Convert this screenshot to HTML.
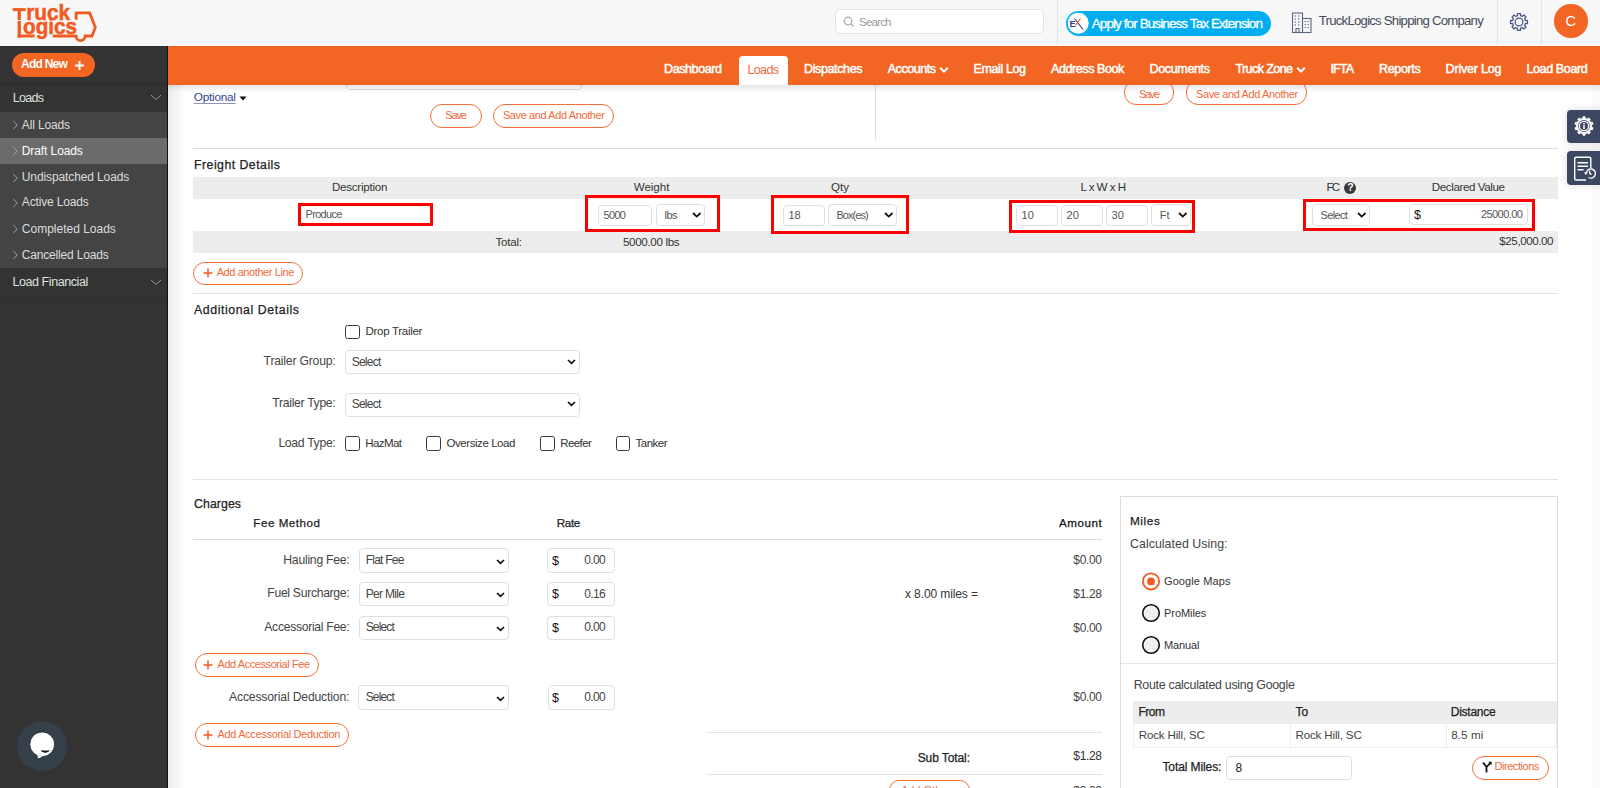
<!DOCTYPE html>
<html><head><meta charset="utf-8">
<style>
*{box-sizing:border-box;margin:0;padding:0}
html,body{width:1600px;height:788px;overflow:hidden;background:#fff;font-family:"Liberation Sans",sans-serif;color:#333}
.a{position:absolute}
.t{position:absolute;white-space:nowrap;line-height:1}
svg{position:absolute;overflow:visible}
</style></head><body>
<div class="a" style="left:0.0px;top:0.0px;width:1600.0px;height:46.0px;background:#f7f7f7"></div>
<div class="a" style="left:0.0px;top:46.0px;width:168.0px;height:742.0px;background:#333"></div>
<div class="a" style="left:167.0px;top:46.0px;width:1.0px;height:742.0px;background:#111"></div>
<div class="a" style="left:168.0px;top:46.0px;width:1432.0px;height:38.5px;background:#f26522"></div>
<div class="a" style="left:168.0px;top:84.5px;width:18.0px;height:703.5px;background:linear-gradient(90deg,#ececec,rgba(255,255,255,0))"></div>
<div class="a" style="left:1592.0px;top:84.5px;width:8.0px;height:703.5px;background:#fbfbfb"></div>
<svg style="left:0;top:0" width="110" height="46" viewBox="0 0 110 46">
<g fill="#f15a22">
<rect x="12.8" y="8.1" width="12.9" height="3"/><rect x="17.6" y="8.1" width="3.3" height="11.9"/>
<rect x="17.6" y="21" width="3.3" height="16.5"/><rect x="17.6" y="34.5" width="17" height="3"/>
<text transform="translate(26.2,20) scale(1,1.42)" font-family="Liberation Sans" font-weight="bold" font-size="16" stroke="#f15a22" stroke-width="0.35" textLength="44" lengthAdjust="spacingAndGlyphs">ruck</text>
<text transform="translate(23,33.5) scale(1,1.42)" font-family="Liberation Sans" font-weight="bold" font-size="16" stroke="#f15a22" stroke-width="0.35" textLength="54" lengthAdjust="spacingAndGlyphs">ogics</text>
</g>
<g fill="none" stroke="#f15a22" stroke-width="2.8" stroke-linejoin="miter">
<path d="M52.7 36 H76 A4.6 4.6 0 0 0 85.2 36 H92 L95.3 27.3 L89.6 12.9 H76.2 V19.8"/>
</g>
</svg>
<div class="a" style="left:834.5px;top:8.5px;width:209.0px;height:25.0px;background:#fff;border:1px solid #e3e3e3;border-radius:5px"></div>
<svg style="left:843px;top:16px" width="12" height="12" viewBox="0 0 12 12"><circle cx="5" cy="5" r="3.8" fill="none" stroke="#aaa" stroke-width="1.2"/><path d="M7.8 7.8 L10.5 10.5" stroke="#aaa" stroke-width="1.3"/></svg>
<div class="t" style="left:859.00px;top:17.00px;font-size:11.50px;color:#9a9a9a;letter-spacing:-0.787px">Search</div>
<div class="a" style="left:1057.0px;top:0.0px;width:1.0px;height:44.0px;background:#e2e2e2"></div>
<div class="a" style="left:1066.0px;top:11.0px;width:205.0px;height:24.5px;background:#00aeef;border-radius:13px"></div>
<svg style="left:1066px;top:11px" width="25" height="25" viewBox="0 0 25 25"><circle cx="12.2" cy="12.2" r="11" fill="#fff" stroke="#00aeef" stroke-width="1"/>
<text x="3.6" y="15.8" font-family="Liberation Sans" font-weight="bold" font-size="9" fill="#2b3a8c">E</text>
<path d="M8.5 7.5 L17 18.5" stroke="#2b3a8c" stroke-width="1.1"/><path d="M14.5 7.5 L9.5 14.5" stroke="#f15a22" stroke-width="1.1"/></svg>
<div class="t" style="left:1091.70px;top:17.00px;font-size:13.50px;color:#fff;letter-spacing:-0.906px;-webkit-text-stroke:0.3px #fff">Apply for Business Tax Extension</div>
<svg style="left:1291px;top:12px" width="22" height="22" viewBox="0 0 22 22"><g fill="none" stroke="#5b6584" stroke-width="1.1">
<rect x="1.5" y="1" width="10" height="19.5"/><rect x="11.5" y="6.5" width="8.5" height="14"/>
<path d="M3.5 4h1.5M7 4h1.5M3.5 7h1.5M7 7h1.5M3.5 10h1.5M7 10h1.5M3.5 13h1.5M7 13h1.5M13.5 9.5h1.3M16.5 9.5h1.3M13.5 12.5h1.3M16.5 12.5h1.3M13.5 15.5h1.3M16.5 15.5h1.3M5 20.5v-4h3v4"/></g></svg>
<div class="t" style="left:1318.80px;top:14.00px;font-size:13.20px;color:#454a5a;letter-spacing:-0.769px">TruckLogics Shipping Company</div>
<div class="a" style="left:1497.0px;top:0.0px;width:1.0px;height:44.0px;background:#e2e2e2"></div>
<svg style="left:1509.1px;top:11.7px" width="20" height="20" viewBox="0 0 20 20"><g fill="none" stroke="#4b5584" stroke-width="1.25" stroke-linejoin="round"><circle cx="10" cy="10" r="3.9"/>
<path d="M8.53 3.56 L8.49 1.53 L11.51 1.53 L11.47 3.56 L13.51 4.41 L14.92 2.94 L17.06 5.08 L15.59 6.49 L16.44 8.53 L18.47 8.49 L18.47 11.51 L16.44 11.47 L15.59 13.51 L17.06 14.92 L14.92 17.06 L13.51 15.59 L11.47 16.44 L11.51 18.47 L8.49 18.47 L8.53 16.44 L6.49 15.59 L5.08 17.06 L2.94 14.92 L4.41 13.51 L3.56 11.47 L1.53 11.51 L1.53 8.49 L3.56 8.53 L4.41 6.49 L2.94 5.08 L5.08 2.94 L6.49 4.41Z"/></g></svg>
<div class="a" style="left:1541.0px;top:0.0px;width:1.0px;height:44.0px;background:#e2e2e2"></div>
<div class="a" style="left:1554.0px;top:4.0px;width:33.5px;height:33.5px;background:#f26522;border-radius:50%"></div>
<div class="t" style="left:1565.50px;top:14.00px;font-size:14.50px;color:#fff">C</div>
<div class="a" style="left:346.0px;top:76.0px;width:236.0px;height:14.0px;border:1px solid #ddd;border-radius:4px;background:#fff"></div>
<div class="t" style="left:193.70px;top:92.00px;font-size:11.80px;color:#34458f;letter-spacing:-0.234px;text-decoration:underline;text-decoration-color:#8a93bd;text-underline-offset:1.5px">Optional</div>
<svg style="left:239px;top:96px" width="8" height="5" viewBox="0 0 8 5"><path d="M0.5 0.5 H7.5 L4 4.5Z" fill="#111"/></svg>
<div class="a" style="left:430.0px;top:104.0px;width:51.5px;height:23.5px;border:1px solid #f26f3a;border-radius:12px;background:#fff"></div>
<div class="t" style="left:445.30px;top:110.00px;font-size:11.00px;color:#f26a3a;letter-spacing:-1.154px">Save</div>
<div class="a" style="left:493.0px;top:104.0px;width:121.0px;height:23.5px;border:1px solid #f26f3a;border-radius:12px;background:#fff"></div>
<div class="t" style="left:502.90px;top:110.00px;font-size:11.00px;color:#f26a3a;letter-spacing:-0.389px">Save and Add Another</div>
<div class="a" style="left:875.0px;top:84.5px;width:1.0px;height:55.5px;background:#ddd"></div>
<div class="a" style="left:1124.0px;top:80.0px;width:50.4px;height:25.4px;border:1px solid #f26f3a;border-radius:12px;background:#fff"></div>
<div class="t" style="left:1138.90px;top:89.00px;font-size:11.00px;color:#f26a3a;letter-spacing:-1.254px">Save</div>
<div class="a" style="left:1186.3px;top:80.0px;width:121.1px;height:25.4px;border:1px solid #f26f3a;border-radius:12px;background:#fff"></div>
<div class="t" style="left:1196.00px;top:89.00px;font-size:11.00px;color:#f26a3a;letter-spacing:-0.384px">Save and Add Another</div>
<div class="a" style="left:193.0px;top:148.0px;width:1365.0px;height:1.0px;background:#ddd"></div>
<div class="a" style="left:168.0px;top:46.0px;width:1432.0px;height:38.5px;background:#f26522"></div>
<div class="a" style="left:168.0px;top:84.5px;width:1432.0px;height:7.5px;background:linear-gradient(rgba(0,0,0,0.1),rgba(0,0,0,0))"></div>
<div class="t" style="left:664.00px;top:63.00px;font-size:12.50px;color:#fff;letter-spacing:-0.391px;-webkit-text-stroke:0.5px #fff">Dashboard</div>
<div class="t" style="left:804.00px;top:63.00px;font-size:12.50px;color:#fff;letter-spacing:-0.368px;-webkit-text-stroke:0.5px #fff">Dispatches</div>
<div class="t" style="left:887.70px;top:63.00px;font-size:12.50px;color:#fff;letter-spacing:-0.448px;-webkit-text-stroke:0.5px #fff">Accounts</div>
<div class="t" style="left:973.60px;top:63.00px;font-size:12.50px;color:#fff;letter-spacing:-0.395px;-webkit-text-stroke:0.5px #fff">Email Log</div>
<div class="t" style="left:1051.00px;top:63.00px;font-size:12.50px;color:#fff;letter-spacing:-0.407px;-webkit-text-stroke:0.5px #fff">Address Book</div>
<div class="t" style="left:1149.60px;top:63.00px;font-size:12.50px;color:#fff;letter-spacing:-0.356px;-webkit-text-stroke:0.5px #fff">Documents</div>
<div class="t" style="left:1235.40px;top:63.00px;font-size:12.50px;color:#fff;letter-spacing:-0.572px;-webkit-text-stroke:0.5px #fff">Truck Zone</div>
<div class="t" style="left:1330.50px;top:63.00px;font-size:12.50px;color:#fff;letter-spacing:-0.896px;-webkit-text-stroke:0.5px #fff">IFTA</div>
<div class="t" style="left:1379.00px;top:63.00px;font-size:12.50px;color:#fff;letter-spacing:-0.342px;-webkit-text-stroke:0.5px #fff">Reports</div>
<div class="t" style="left:1445.60px;top:63.00px;font-size:12.50px;color:#fff;letter-spacing:-0.199px;-webkit-text-stroke:0.5px #fff">Driver Log</div>
<div class="t" style="left:1526.40px;top:63.00px;font-size:12.50px;color:#fff;letter-spacing:-0.369px;-webkit-text-stroke:0.5px #fff">Load Board</div>
<svg style="left:939.3px;top:66px" width="10" height="8" viewBox="0 0 10 8"><path d="M1.2 1.8 L5 5.6 L8.8 1.8" fill="none" stroke="#fff" stroke-width="2"/></svg>
<svg style="left:1296.0px;top:66px" width="10" height="8" viewBox="0 0 10 8"><path d="M1.2 1.8 L5 5.6 L8.8 1.8" fill="none" stroke="#fff" stroke-width="2"/></svg>
<div class="a" style="left:739.0px;top:56.0px;width:49.0px;height:28.5px;background:#fff;border-radius:4px 4px 0 0"></div>
<div class="t" style="left:747.50px;top:64.00px;font-size:12.50px;color:#f26a3a;letter-spacing:-0.641px">Loads</div>
<div class="a" style="left:12.3px;top:53.0px;width:82.9px;height:23.8px;background:#f26522;border-radius:12px"></div>
<div class="t" style="left:21.00px;top:58.00px;font-size:12.00px;color:#fff;font-weight:bold;letter-spacing:-0.746px">Add New</div>
<svg style="left:74px;top:60px" width="11" height="11" viewBox="0 0 11 11"><path d="M5.5 1 V10 M1 5.5 H10" stroke="#fff" stroke-width="2"/></svg>
<div class="a" style="left:0.0px;top:83.0px;width:167.0px;height:1.0px;background:#2b2b2b"></div>
<div class="a" style="left:0.0px;top:112.0px;width:167.0px;height:155.5px;background:#444"></div>
<div class="a" style="left:0.0px;top:137.7px;width:167.0px;height:26.2px;background:#6b6b6b"></div>
<div class="t" style="left:12.75px;top:92.00px;font-size:12.50px;color:#dde2de;letter-spacing:-0.703px">Loads</div>
<div class="t" style="left:12.40px;top:276.00px;font-size:12.50px;color:#dde2de;letter-spacing:-0.416px">Load Financial</div>
<svg style="left:150px;top:94px" width="12" height="7" viewBox="0 0 12 7"><path d="M1 1 L6 5.5 L11 1" fill="none" stroke="#999" stroke-width="1"/></svg>
<svg style="left:150px;top:279px" width="12" height="7" viewBox="0 0 12 7"><path d="M1 1 L6 5.5 L11 1" fill="none" stroke="#999" stroke-width="1"/></svg>
<div class="a" style="left:0.0px;top:297.0px;width:167.0px;height:1.0px;background:#2e2e2e"></div>
<div class="t" style="left:21.80px;top:119.00px;font-size:12.00px;color:#ddd;letter-spacing:-0.147px">All Loads</div>
<svg style="left:12px;top:120.1px" width="7" height="10" viewBox="0 0 7 10"><path d="M1.2 1 L5.3 5 L1.2 9" fill="none" stroke="#9aa3ab" stroke-width="1"/></svg>
<div class="t" style="left:21.80px;top:145.00px;font-size:12.00px;color:#fff;letter-spacing:-0.096px">Draft Loads</div>
<svg style="left:12px;top:146.2px" width="7" height="10" viewBox="0 0 7 10"><path d="M1.2 1 L5.3 5 L1.2 9" fill="none" stroke="#9aa3ab" stroke-width="1"/></svg>
<div class="t" style="left:21.80px;top:171.00px;font-size:12.00px;color:#ddd;letter-spacing:-0.114px">Undispatched Loads</div>
<svg style="left:12px;top:172.5px" width="7" height="10" viewBox="0 0 7 10"><path d="M1.2 1 L5.3 5 L1.2 9" fill="none" stroke="#9aa3ab" stroke-width="1"/></svg>
<div class="t" style="left:21.80px;top:196.00px;font-size:12.00px;color:#ddd;letter-spacing:-0.153px">Active Loads</div>
<svg style="left:12px;top:198.0px" width="7" height="10" viewBox="0 0 7 10"><path d="M1.2 1 L5.3 5 L1.2 9" fill="none" stroke="#9aa3ab" stroke-width="1"/></svg>
<div class="t" style="left:21.80px;top:223.00px;font-size:12.00px;color:#ddd">Completed Loads</div>
<svg style="left:12px;top:224.3px" width="7" height="10" viewBox="0 0 7 10"><path d="M1.2 1 L5.3 5 L1.2 9" fill="none" stroke="#9aa3ab" stroke-width="1"/></svg>
<div class="t" style="left:21.80px;top:249.00px;font-size:12.00px;color:#ddd;letter-spacing:-0.177px">Cancelled Loads</div>
<svg style="left:12px;top:250.1px" width="7" height="10" viewBox="0 0 7 10"><path d="M1.2 1 L5.3 5 L1.2 9" fill="none" stroke="#9aa3ab" stroke-width="1"/></svg>
<div class="a" style="left:17.0px;top:721.0px;width:50.0px;height:50.0px;background:#36404a;border-radius:50%"></div>
<svg style="left:28px;top:730px" width="30" height="32" viewBox="0 0 30 32"><g fill="#fff" stroke="#0d1a24" stroke-width="0.8"><path d="M9 23.5 L9.4 29.2 L17.5 26.2Z"/><circle cx="14.2" cy="14.3" r="12.4"/></g><path d="M9.6 24.5 L10 28 L15.5 25.8Z" fill="#fff"/><path d="M13.2 20.6 Q17.2 23.8 21.2 20.6" fill="#0d1a24" stroke="#0d1a24" stroke-width="1.2"/></svg>
<div class="t" style="left:194.00px;top:159.00px;font-size:12.30px;color:#222;letter-spacing:0.478px;-webkit-text-stroke:0.25px currentColor">Freight Details</div>
<div class="a" style="left:193.0px;top:176.6px;width:1365.0px;height:22.3px;background:#ededed"></div>
<div class="t" style="left:332.00px;top:181.00px;font-size:11.60px;color:#333;letter-spacing:-0.260px">Description</div>
<div class="t" style="left:633.70px;top:181.00px;font-size:11.60px;color:#333;letter-spacing:-0.035px">Weight</div>
<div class="t" style="left:831.00px;top:181.00px;font-size:11.60px;color:#333;letter-spacing:-0.031px">Qty</div>
<div class="t" style="left:1080.50px;top:181.00px;font-size:11.60px;color:#333;letter-spacing:-0.539px">L x W x H</div>
<div class="t" style="left:1326.40px;top:181.00px;font-size:11.60px;color:#333;letter-spacing:-1.838px">FC</div>
<div class="a" style="left:1344.0px;top:181.5px;width:12.2px;height:12.2px;background:#3a3a3a;border-radius:50%"></div>
<div class="t" style="left:1347.30px;top:182.00px;font-size:10.50px;color:#fff;font-weight:bold">?</div>
<div class="t" style="left:1431.80px;top:181.00px;font-size:11.60px;color:#333;letter-spacing:-0.403px">Declared Value</div>
<div class="a" style="left:193.0px;top:231.2px;width:1365.0px;height:21.8px;background:#ededed"></div>
<div class="a" style="left:298.0px;top:203.0px;width:135.0px;height:22.7px;border:3px solid #ff0000"></div>
<div class="t" style="left:305.60px;top:209.00px;font-size:11.00px;color:#555;letter-spacing:-0.700px">Produce</div>
<div class="a" style="left:598.4px;top:204.5px;width:53.6px;height:21.1px;border:1px solid #e0e0e0;border-radius:4px;background:#fff;"></div>
<div class="t" style="left:603.60px;top:210.00px;font-size:11.00px;color:#555;letter-spacing:-0.700px">5000</div>
<div class="a" style="left:656.4px;top:204.0px;width:48.3px;height:22.0px;border:1px solid #e0e0e0;border-radius:4px;background:#fff;"></div>
<div class="t" style="left:664.60px;top:210.00px;font-size:11.00px;color:#555;letter-spacing:-0.531px">lbs</div>
<svg style="left:691.5px;top:212.3px" width="9.5" height="5.8" viewBox="0 0 9.5 5.8"><path d="M1 1 L4.75 4.55 L8.50 1" fill="none" stroke="#111" stroke-width="1.8"/></svg>
<div class="a" style="left:584.9px;top:194.7px;width:135.4px;height:37.1px;border:3px solid #ff0000"></div>
<div class="a" style="left:783.3px;top:204.5px;width:41.4px;height:21.1px;border:1px solid #e0e0e0;border-radius:4px;background:#fff;"></div>
<div class="t" style="left:788.50px;top:210.00px;font-size:11.00px;color:#555">18</div>
<div class="a" style="left:827.5px;top:204.0px;width:69.1px;height:22.0px;border:1px solid #e0e0e0;border-radius:4px;background:#fff;"></div>
<div class="t" style="left:836.40px;top:210.00px;font-size:11.00px;color:#555;letter-spacing:-0.946px">Box(es)</div>
<svg style="left:884.0px;top:212.3px" width="9.5" height="5.8" viewBox="0 0 9.5 5.8"><path d="M1 1 L4.75 4.55 L8.50 1" fill="none" stroke="#111" stroke-width="1.8"/></svg>
<div class="a" style="left:771.0px;top:195.2px;width:137.8px;height:39.0px;border:3px solid #ff0000"></div>
<div class="a" style="left:1016.0px;top:204.5px;width:41.7px;height:21.1px;border:1px solid #e0e0e0;border-radius:4px;background:#fff;"></div>
<div class="t" style="left:1021.60px;top:210.00px;font-size:11.00px;color:#555">10</div>
<div class="a" style="left:1061.0px;top:204.5px;width:41.8px;height:21.1px;border:1px solid #e0e0e0;border-radius:4px;background:#fff;"></div>
<div class="t" style="left:1066.60px;top:210.00px;font-size:11.00px;color:#555">20</div>
<div class="a" style="left:1106.0px;top:204.5px;width:41.6px;height:21.1px;border:1px solid #e0e0e0;border-radius:4px;background:#fff;"></div>
<div class="t" style="left:1111.60px;top:210.00px;font-size:11.00px;color:#555">30</div>
<div class="a" style="left:1151.2px;top:204.0px;width:39.4px;height:22.0px;border:1px solid #e0e0e0;border-radius:4px;background:#fff;"></div>
<div class="t" style="left:1159.80px;top:210.00px;font-size:11.00px;color:#555">Ft</div>
<svg style="left:1177.5px;top:212.3px" width="9.5" height="5.8" viewBox="0 0 9.5 5.8"><path d="M1 1 L4.75 4.55 L8.50 1" fill="none" stroke="#111" stroke-width="1.8"/></svg>
<div class="a" style="left:1009.0px;top:199.6px;width:186.4px;height:33.0px;border:3px solid #ff0000"></div>
<div class="a" style="left:1311.9px;top:203.6px;width:58.3px;height:22.8px;border:1px solid #e0e0e0;border-radius:4px;background:#fff;"></div>
<div class="t" style="left:1320.60px;top:210.00px;font-size:11.00px;color:#555;letter-spacing:-0.672px">Select</div>
<svg style="left:1357.2px;top:212.3px" width="9.5" height="5.8" viewBox="0 0 9.5 5.8"><path d="M1 1 L4.75 4.55 L8.50 1" fill="none" stroke="#111" stroke-width="1.8"/></svg>
<div class="a" style="left:1409.4px;top:204.0px;width:118.4px;height:21.0px;border:1px solid #e0e0e0;border-radius:4px;background:#fff;"></div>
<div class="t" style="left:1414.00px;top:209.00px;font-size:12.50px;color:#111">$</div>
<div class="t" style="left:1480.90px;top:209.00px;font-size:11.00px;color:#555;letter-spacing:-0.554px">25000.00</div>
<div class="a" style="left:1302.6px;top:198.9px;width:232.6px;height:32.1px;border:3px solid #ff0000"></div>
<div class="t" style="left:495.40px;top:236.00px;font-size:11.60px;color:#333;letter-spacing:-0.230px">Total:</div>
<div class="t" style="left:623.00px;top:236.00px;font-size:11.60px;color:#333;letter-spacing:-0.330px">5000.00 lbs</div>
<div class="t" style="left:1499.30px;top:235.00px;font-size:11.60px;color:#333;letter-spacing:-0.418px">$25,000.00</div>
<div class="a" style="left:193.1px;top:261.5px;width:110.3px;height:23.1px;border:1px solid #f26f3a;border-radius:12px;background:#fff"></div>
<svg style="left:202.5px;top:267.5px" width="10" height="10" viewBox="0 0 10 10"><path d="M5 0.5 V9.5 M0.5 5 H9.5" stroke="#f15a22" stroke-width="1.5"/></svg>
<div class="t" style="left:216.70px;top:267.00px;font-size:11.00px;color:#f26a3a;letter-spacing:-0.414px">Add another Line</div>
<div class="a" style="left:193.0px;top:293.2px;width:1365.0px;height:1.0px;background:#e3e3e3"></div>
<div class="t" style="left:194.00px;top:304.00px;font-size:12.30px;color:#222;letter-spacing:0.585px;-webkit-text-stroke:0.25px currentColor">Additional Details</div>
<div class="a" style="left:345.2px;top:324.5px;width:14.6px;height:14.4px;border:1.6px solid #3a3a3a;border-radius:2.5px;background:#fff"></div>
<div class="t" style="left:365.50px;top:326.00px;font-size:11.50px;color:#333;letter-spacing:-0.288px">Drop Trailer</div>
<div class="t" style="left:263.60px;top:355.00px;font-size:12.20px;color:#444;letter-spacing:-0.201px">Trailer Group:</div>
<div class="a" style="left:345.2px;top:350.3px;width:234.6px;height:24.1px;border:1px solid #e0e0e0;border-radius:4px;background:#fff;"></div>
<div class="t" style="left:351.70px;top:356.00px;font-size:12.00px;color:#444;letter-spacing:-0.755px">Select</div>
<svg style="left:567.4px;top:359.2px" width="9.0" height="5.5" viewBox="0 0 9.0 5.5"><path d="M1 1 L4.50 4.30 L8.00 1" fill="none" stroke="#111" stroke-width="1.7"/></svg>
<div class="t" style="left:272.30px;top:397.00px;font-size:12.20px;color:#444;letter-spacing:-0.302px">Trailer Type:</div>
<div class="a" style="left:345.2px;top:392.5px;width:234.6px;height:24.1px;border:1px solid #e0e0e0;border-radius:4px;background:#fff;"></div>
<div class="t" style="left:351.70px;top:398.00px;font-size:12.00px;color:#444;letter-spacing:-0.755px">Select</div>
<svg style="left:567.4px;top:401.2px" width="9.0" height="5.5" viewBox="0 0 9.0 5.5"><path d="M1 1 L4.50 4.30 L8.00 1" fill="none" stroke="#111" stroke-width="1.7"/></svg>
<div class="t" style="left:278.40px;top:437.00px;font-size:12.20px;color:#444;letter-spacing:-0.303px">Load Type:</div>
<div class="a" style="left:345.2px;top:436.2px;width:14.6px;height:14.4px;border:1.6px solid #3a3a3a;border-radius:2.5px;background:#fff"></div>
<div class="t" style="left:365.30px;top:438.00px;font-size:11.50px;color:#333;letter-spacing:-0.585px">HazMat</div>
<div class="a" style="left:426.1px;top:436.2px;width:14.6px;height:14.4px;border:1.6px solid #3a3a3a;border-radius:2.5px;background:#fff"></div>
<div class="t" style="left:446.50px;top:438.00px;font-size:11.50px;color:#333;letter-spacing:-0.435px">Oversize Load</div>
<div class="a" style="left:540.0px;top:436.2px;width:14.6px;height:14.4px;border:1.6px solid #3a3a3a;border-radius:2.5px;background:#fff"></div>
<div class="t" style="left:560.30px;top:438.00px;font-size:11.50px;color:#333;letter-spacing:-0.600px">Reefer</div>
<div class="a" style="left:615.9px;top:436.2px;width:14.6px;height:14.4px;border:1.6px solid #3a3a3a;border-radius:2.5px;background:#fff"></div>
<div class="t" style="left:635.60px;top:438.00px;font-size:11.50px;color:#333;letter-spacing:-0.520px">Tanker</div>
<div class="a" style="left:193.0px;top:478.5px;width:1365.0px;height:1.0px;background:#e3e3e3"></div>
<div class="t" style="left:194.00px;top:498.00px;font-size:12.30px;color:#222;letter-spacing:0.083px;-webkit-text-stroke:0.25px currentColor">Charges</div>
<div class="t" style="left:253.30px;top:517.00px;font-size:11.60px;color:#222;letter-spacing:0.536px;-webkit-text-stroke:0.25px currentColor">Fee Method</div>
<div class="t" style="left:556.75px;top:517.00px;font-size:11.60px;color:#222;letter-spacing:-0.317px;-webkit-text-stroke:0.25px currentColor">Rate</div>
<div class="t" style="left:1058.90px;top:517.00px;font-size:11.60px;color:#111;letter-spacing:0.600px;-webkit-text-stroke:0.25px currentColor">Amount</div>
<div class="a" style="left:193.0px;top:539.0px;width:909.0px;height:1.0px;background:#ddd"></div>
<div class="t" style="left:283.30px;top:554.00px;font-size:12.20px;color:#444;letter-spacing:-0.244px">Hauling Fee:</div>
<div class="a" style="left:358.5px;top:548.3px;width:150.9px;height:25.0px;border:1px solid #e0e0e0;border-radius:4px;background:#fff;"></div>
<div class="t" style="left:365.70px;top:554.00px;font-size:12.00px;color:#444;letter-spacing:-0.757px">Flat Fee</div>
<svg style="left:496.3px;top:558.5px" width="9.0" height="5.5" viewBox="0 0 9.0 5.5"><path d="M1 1 L4.50 4.30 L8.00 1" fill="none" stroke="#111" stroke-width="1.7"/></svg>
<div class="a" style="left:547.4px;top:548.3px;width:67.2px;height:25.0px;border:1px solid #e0e0e0;border-radius:4px;background:#fff;"></div>
<div class="t" style="left:552.00px;top:555.00px;font-size:12.50px;color:#111">$</div>
<div class="t" style="left:584.20px;top:554.00px;font-size:12.00px;color:#444;letter-spacing:-0.658px">0.00</div>
<div class="t" style="left:267.30px;top:587.00px;font-size:12.20px;color:#444;letter-spacing:-0.308px">Fuel Surcharge:</div>
<div class="a" style="left:358.5px;top:582.3px;width:150.9px;height:24.2px;border:1px solid #e0e0e0;border-radius:4px;background:#fff;"></div>
<div class="t" style="left:365.70px;top:588.00px;font-size:12.00px;color:#444;letter-spacing:-0.686px">Per Mile</div>
<svg style="left:496.3px;top:592.1px" width="9.0" height="5.5" viewBox="0 0 9.0 5.5"><path d="M1 1 L4.50 4.30 L8.00 1" fill="none" stroke="#111" stroke-width="1.7"/></svg>
<div class="a" style="left:547.4px;top:582.3px;width:67.2px;height:24.2px;border:1px solid #e0e0e0;border-radius:4px;background:#fff;"></div>
<div class="t" style="left:552.00px;top:588.00px;font-size:12.50px;color:#111">$</div>
<div class="t" style="left:584.20px;top:588.00px;font-size:12.00px;color:#444;letter-spacing:-0.658px">0.16</div>
<div class="t" style="left:264.30px;top:621.00px;font-size:12.20px;color:#444;letter-spacing:-0.312px">Accessorial Fee:</div>
<div class="a" style="left:358.5px;top:616.0px;width:150.9px;height:24.2px;border:1px solid #e0e0e0;border-radius:4px;background:#fff;"></div>
<div class="t" style="left:365.70px;top:621.00px;font-size:12.00px;color:#444;letter-spacing:-0.835px">Select</div>
<svg style="left:496.3px;top:625.9px" width="9.0" height="5.5" viewBox="0 0 9.0 5.5"><path d="M1 1 L4.50 4.30 L8.00 1" fill="none" stroke="#111" stroke-width="1.7"/></svg>
<div class="a" style="left:547.4px;top:616.0px;width:67.2px;height:24.2px;border:1px solid #e0e0e0;border-radius:4px;background:#fff;"></div>
<div class="t" style="left:552.00px;top:622.00px;font-size:12.50px;color:#111">$</div>
<div class="t" style="left:584.20px;top:621.00px;font-size:12.00px;color:#444;letter-spacing:-0.658px">0.00</div>
<div class="t" style="left:1073.30px;top:554.00px;font-size:12.00px;color:#444;letter-spacing:-0.325px">$0.00</div>
<div class="t" style="left:905.00px;top:588.00px;font-size:12.00px;color:#333;letter-spacing:-0.106px">x 8.00 miles =</div>
<div class="t" style="left:1073.30px;top:588.00px;font-size:12.00px;color:#444;letter-spacing:-0.325px">$1.28</div>
<div class="t" style="left:1073.30px;top:622.00px;font-size:12.00px;color:#444;letter-spacing:-0.325px">$0.00</div>
<div class="a" style="left:194.6px;top:653.3px;width:124.6px;height:23.3px;border:1px solid #f26f3a;border-radius:12px;background:#fff"></div>
<svg style="left:203px;top:659.5px" width="10" height="10" viewBox="0 0 10 10"><path d="M5 0.5 V9.5 M0.5 5 H9.5" stroke="#f15a22" stroke-width="1.5"/></svg>
<div class="t" style="left:217.50px;top:659.00px;font-size:11.00px;color:#f26a3a;letter-spacing:-0.431px">Add Accessorial Fee</div>
<div class="t" style="left:229.00px;top:691.00px;font-size:12.20px;color:#444;letter-spacing:-0.170px">Accessorial Deduction:</div>
<div class="a" style="left:358.3px;top:685.4px;width:151.2px;height:25.1px;border:1px solid #e0e0e0;border-radius:4px;background:#fff;"></div>
<div class="t" style="left:365.70px;top:691.00px;font-size:12.00px;color:#444;letter-spacing:-0.835px">Select</div>
<svg style="left:496.3px;top:695.8px" width="9.0" height="5.5" viewBox="0 0 9.0 5.5"><path d="M1 1 L4.50 4.30 L8.00 1" fill="none" stroke="#111" stroke-width="1.7"/></svg>
<div class="a" style="left:547.5px;top:685.4px;width:67.1px;height:25.1px;border:1px solid #e0e0e0;border-radius:4px;background:#fff;"></div>
<div class="t" style="left:552.00px;top:692.00px;font-size:12.50px;color:#111">$</div>
<div class="t" style="left:584.20px;top:691.00px;font-size:12.00px;color:#444;letter-spacing:-0.658px">0.00</div>
<div class="t" style="left:1073.30px;top:691.00px;font-size:12.00px;color:#444;letter-spacing:-0.325px">$0.00</div>
<div class="a" style="left:194.6px;top:723.4px;width:154.9px;height:23.4px;border:1px solid #f26f3a;border-radius:12px;background:#fff"></div>
<svg style="left:203px;top:729.5px" width="10" height="10" viewBox="0 0 10 10"><path d="M5 0.5 V9.5 M0.5 5 H9.5" stroke="#f15a22" stroke-width="1.5"/></svg>
<div class="t" style="left:217.50px;top:729.00px;font-size:11.00px;color:#f26a3a;letter-spacing:-0.332px">Add Accessorial Deduction</div>
<div class="a" style="left:706.5px;top:732.3px;width:395.5px;height:1.0px;background:#e3e3e3"></div>
<div class="t" style="left:917.70px;top:752.00px;font-size:12.00px;color:#222;letter-spacing:-0.092px;-webkit-text-stroke:0.25px currentColor">Sub Total:</div>
<div class="t" style="left:1073.30px;top:750.00px;font-size:12.00px;color:#333;letter-spacing:-0.325px">$1.28</div>
<div class="a" style="left:706.5px;top:774.1px;width:395.5px;height:1.0px;background:#e3e3e3"></div>
<div class="a" style="left:889.4px;top:780.3px;width:80.6px;height:19.7px;border:1px solid #f26f3a;border-radius:12px;background:#fff"></div>
<div class="t" style="left:1073.30px;top:785.00px;font-size:12.00px;color:#444;letter-spacing:-0.325px">$0.00</div>
<div class="t" style="left:901.00px;top:785.00px;font-size:11.00px;color:#f26a3a">Add Other</div>
<div class="a" style="left:1120.0px;top:496.4px;width:438.0px;height:303.6px;border:1px solid #ddd;background:#fff"></div>
<div class="a" style="left:1121.0px;top:663.2px;width:436.0px;height:1.0px;background:#e6e6e6"></div>
<div class="t" style="left:1129.90px;top:516.00px;font-size:11.80px;color:#222;letter-spacing:0.634px;-webkit-text-stroke:0.25px currentColor">Miles</div>
<div class="t" style="left:1130.00px;top:538.00px;font-size:12.40px;color:#444;letter-spacing:0.026px">Calculated Using:</div>
<svg style="left:1140px;top:570px" width="22" height="22" viewBox="0 0 22 22"><circle cx="11" cy="11.4" r="8.1" fill="#fff" stroke="#f15a22" stroke-width="1.8"/><circle cx="11" cy="11.4" r="3.9" fill="#f15a22"/></svg>
<div class="t" style="left:1164.00px;top:576.00px;font-size:11.00px;color:#333;letter-spacing:0.096px">Google Maps</div>
<svg style="left:1140px;top:602.4px" width="22" height="22" viewBox="0 0 22 22"><circle cx="11" cy="11" r="8.3" fill="#f0f0f0" stroke="#111" stroke-width="1.6"/></svg>
<svg style="left:1140px;top:634.4px" width="22" height="22" viewBox="0 0 22 22"><circle cx="11" cy="11" r="8.3" fill="#f0f0f0" stroke="#111" stroke-width="1.6"/></svg>
<div class="t" style="left:1164.00px;top:608.00px;font-size:11.00px;color:#333;letter-spacing:-0.059px">ProMiles</div>
<div class="t" style="left:1164.00px;top:640.00px;font-size:11.00px;color:#333;letter-spacing:-0.113px">Manual</div>
<div class="t" style="left:1133.70px;top:679.00px;font-size:12.40px;color:#444;letter-spacing:-0.271px">Route calculated using Google</div>
<div class="a" style="left:1133.3px;top:700.6px;width:423.7px;height:23.4px;background:#ededed"></div>
<div class="a" style="left:1133.3px;top:724.0px;width:423.7px;height:23.6px;border:1px solid #eee;border-top:none;background:#fff"></div>
<div class="a" style="left:1290.0px;top:724.0px;width:1.0px;height:23.4px;background:#eee"></div>
<div class="a" style="left:1446.0px;top:724.0px;width:1.0px;height:23.4px;background:#eee"></div>
<div class="t" style="left:1138.40px;top:706.00px;font-size:12.00px;color:#222;letter-spacing:-0.467px;-webkit-text-stroke:0.25px currentColor">From</div>
<div class="t" style="left:1295.50px;top:706.00px;font-size:12.00px;color:#222;-webkit-text-stroke:0.25px currentColor">To</div>
<div class="t" style="left:1450.80px;top:706.00px;font-size:12.00px;color:#222;letter-spacing:-0.255px;-webkit-text-stroke:0.25px currentColor">Distance</div>
<div class="t" style="left:1138.70px;top:729.00px;font-size:11.60px;color:#444;letter-spacing:-0.168px">Rock Hill, SC</div>
<div class="t" style="left:1295.50px;top:729.00px;font-size:11.60px;color:#444;letter-spacing:-0.168px">Rock Hill, SC</div>
<div class="t" style="left:1451.30px;top:729.00px;font-size:11.60px;color:#444;letter-spacing:0.068px">8.5 mi</div>
<div class="t" style="left:1162.40px;top:761.00px;font-size:12.00px;color:#222;letter-spacing:-0.091px;-webkit-text-stroke:0.25px currentColor">Total Miles:</div>
<div class="a" style="left:1226.4px;top:756.3px;width:126.1px;height:24.1px;border:1px solid #e0e0e0;border-radius:4px;background:#fff;"></div>
<div class="t" style="left:1235.40px;top:762.00px;font-size:12.00px;color:#222">8</div>
<div class="a" style="left:1472.0px;top:756.3px;width:76.8px;height:23.4px;border:1px solid #f26f3a;border-radius:12px;background:#fff"></div>
<svg style="left:1482px;top:761px" width="11" height="12" viewBox="0 0 11 12"><path d="M1 1.5 L4.5 6 V11.5 M4.5 6 L8.5 1.8" fill="none" stroke="#111" stroke-width="1.8"/><path d="M6.2 0.8 H9.6 V4.2Z" fill="#111"/></svg>
<div class="t" style="left:1494.50px;top:761.00px;font-size:11.00px;color:#f26a3a;letter-spacing:-0.449px">Directions</div>
<div class="a" style="left:1567.4px;top:109.5px;width:36.6px;height:33.2px;background:#3d4663;border-radius:4px;box-shadow:0 0 8px rgba(0,0,0,0.15)"></div>
<div class="a" style="left:1567.4px;top:151.4px;width:36.6px;height:33.2px;background:#3d4663;border-radius:4px;box-shadow:0 0 8px rgba(0,0,0,0.15)"></div>
<svg style="left:1574.3px;top:116.4px" width="20" height="20" viewBox="0 0 20 20">
<path d="M8.63 2.52 L8.91 0.76 L11.09 0.76 L11.37 2.52 L13.29 3.15 L14.54 1.89 L16.31 3.17 L15.50 4.75 L16.69 6.39 L18.45 6.11 L19.12 8.19 L17.53 8.99 L17.53 11.01 L19.12 11.81 L18.45 13.89 L16.69 13.61 L15.50 15.25 L16.31 16.83 L14.54 18.11 L13.29 16.85 L11.37 17.48 L11.09 19.24 L8.91 19.24 L8.63 17.48 L6.71 16.85 L5.46 18.11 L3.69 16.83 L4.50 15.25 L3.31 13.61 L1.55 13.89 L0.88 11.81 L2.47 11.01 L2.47 8.99 L0.88 8.19 L1.55 6.11 L3.31 6.39 L4.50 4.75 L3.69 3.17 L5.46 1.89 L6.71 3.15Z" fill="#fff" stroke="#fff" stroke-width="0.8" stroke-linejoin="round"/>
<circle cx="10" cy="10" r="5.9" fill="#3d4663"/><circle cx="10" cy="10" r="4.6" fill="none" stroke="#fff" stroke-width="1.3"/>
<circle cx="10" cy="7.6" r="0.9" fill="#fff"/><rect x="9.25" y="9" width="1.5" height="4" fill="#fff"/></svg>
<svg style="left:1573px;top:156px" width="24" height="26" viewBox="0 0 24 26">
<g fill="none" stroke="#fff" stroke-width="1.4">
<path d="M13 24 H3 Q1.7 24 1.7 22.7 V2.5 Q1.7 1.2 3 1.2 H16.5 Q17.8 1.2 17.8 2.5 V12"/>
<path d="M4.5 6.8 H15 M4.5 10.3 H15 M4.5 13.8 H10.5"/>
<path d="M13.2 17.5 A4.6 4.6 0 1 1 15.5 21.5"/><path d="M16.6 14.6 V17.2 L18.4 18.6"/>
</g><path d="M11 16.2 L14.8 16.2 L12.9 19Z" fill="#fff"/></svg>
</body></html>
